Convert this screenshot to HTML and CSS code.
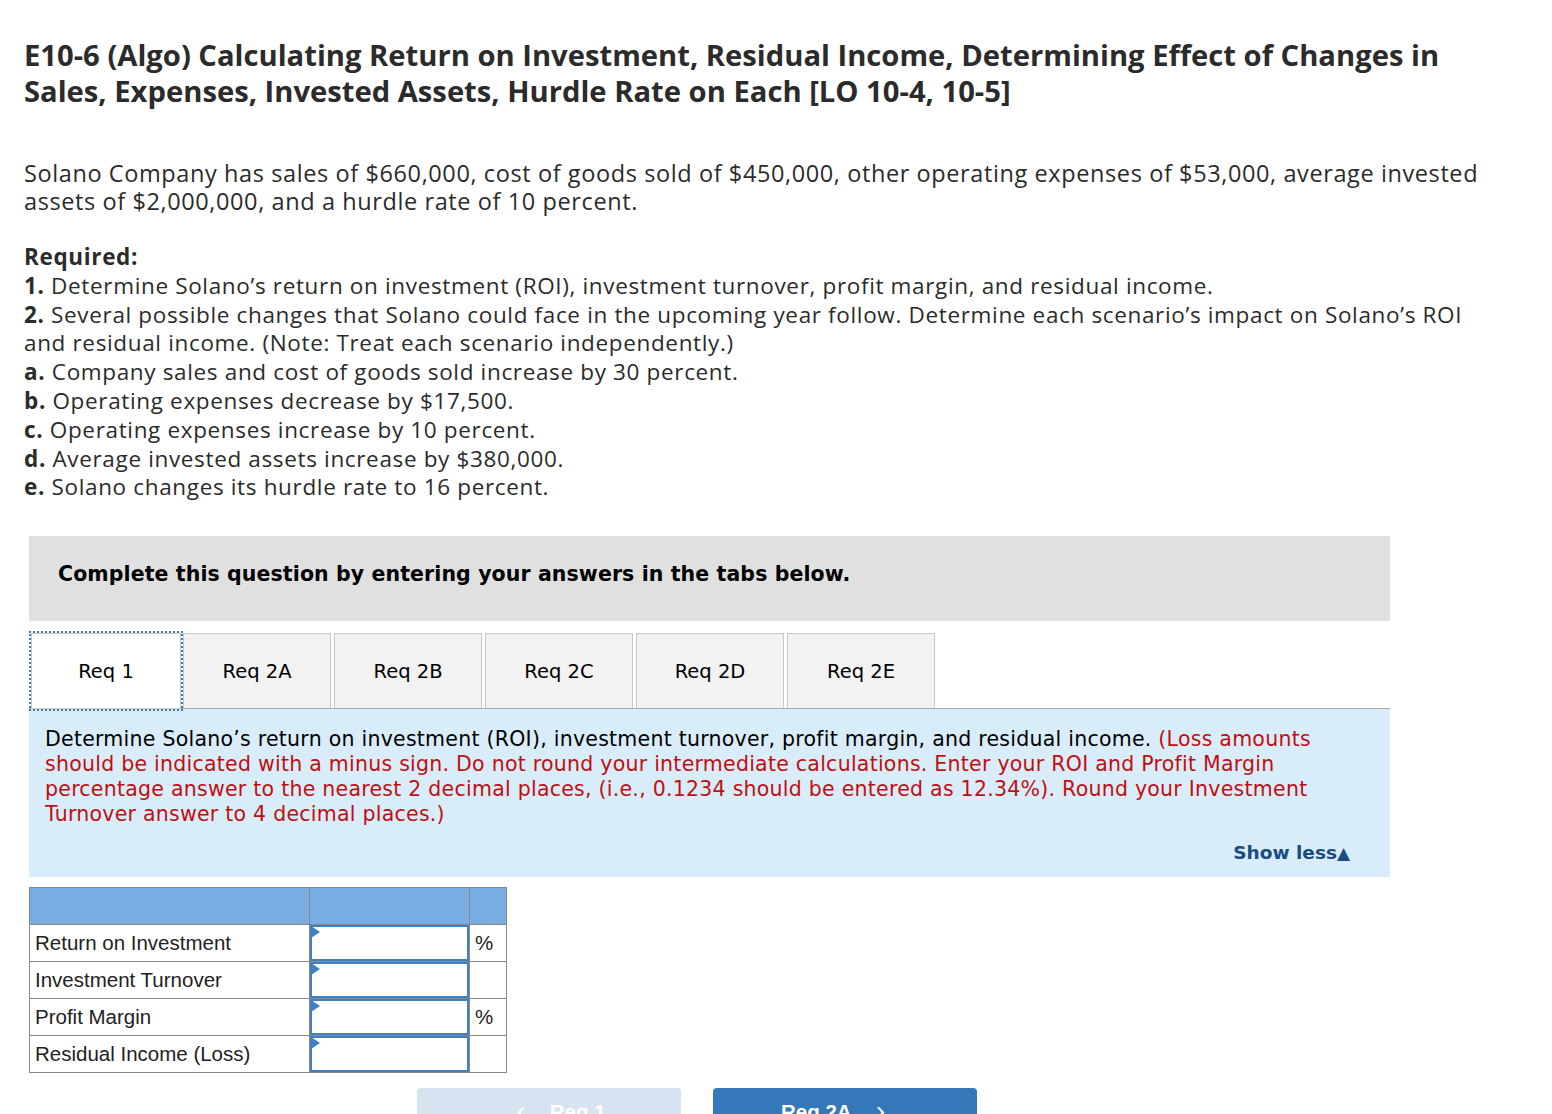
FILE: index.html
```html
<!DOCTYPE html>
<html>
<head>
<meta charset="utf-8">
<link rel="stylesheet" href="styles.css">
</head>
<body>
<div class="page">
  <h1 class="title">E10-6 (Algo) Calculating Return on Investment, Residual Income, Determining Effect of Changes in Sales, Expenses, Invested Assets, Hurdle Rate on Each [LO 10-4, 10-5]</h1>
  <p class="intro">Solano Company has sales of $660,000, cost of goods sold of $450,000, other operating expenses of $53,000, average invested assets of $2,000,000, and a hurdle rate of 10 percent.</p>
  <div class="required">
    <div><b>Required:</b></div>
    <div><b>1.</b> Determine Solano’s return on investment (ROI), investment turnover, profit margin, and residual income.</div>
    <div><b>2.</b> Several possible changes that Solano could face in the upcoming year follow. Determine each scenario’s impact on Solano’s ROI and residual income. (Note: Treat each scenario independently.)</div>
    <div><b>a.</b> Company sales and cost of goods sold increase by 30 percent.</div>
    <div><b>b.</b> Operating expenses decrease by $17,500.</div>
    <div><b>c.</b> Operating expenses increase by 10 percent.</div>
    <div><b>d.</b> Average invested assets increase by $380,000.</div>
    <div><b>e.</b> Solano changes its hurdle rate to 16 percent.</div>
  </div>

  <div class="work">
    <div class="banner">Complete this question by entering your answers in the tabs below.</div>
    <div class="tabs">
      <div class="tab active">Req 1</div>
      <div class="tab">Req 2A</div>
      <div class="tab">Req 2B</div>
      <div class="tab">Req 2C</div>
      <div class="tab">Req 2D</div>
      <div class="tab">Req 2E</div>
    </div>
    <div class="panel">
      <p class="instr">Determine Solano’s return on investment (ROI), investment turnover, profit margin, and residual income. <span class="red">(Loss amounts should be indicated with a minus sign. Do not round your intermediate calculations. Enter your ROI and Profit Margin percentage answer to the nearest 2 decimal places, (i.e., 0.1234 should be entered as 12.34%). Round your Investment Turnover answer to 4 decimal places.)</span></p>
      <div class="showless">Show less<span class="tri">▲</span></div>
    </div>

    <table class="grid">
      <tr class="head"><td class="c1"></td><td class="c2"></td><td class="c3"></td></tr>
      <tr><td class="c1">Return on Investment</td><td class="c2"><div class="inp"></div></td><td class="c3">%</td></tr>
      <tr><td class="c1">Investment Turnover</td><td class="c2"><div class="inp"></div></td><td class="c3"></td></tr>
      <tr><td class="c1">Profit Margin</td><td class="c2"><div class="inp"></div></td><td class="c3">%</td></tr>
      <tr><td class="c1">Residual Income (Loss)</td><td class="c2"><div class="inp"></div></td><td class="c3"></td></tr>
    </table>

    <div class="nav">
      <div class="btn prev"><span class="chev">‹</span>Req 1</div>
      <div class="btn next">Req 2A<span class="chev">›</span></div>
    </div>
  </div>
</div>
</body>
</html>
```

FILE: styles.css
```css
html, body {
  margin: 0;
  padding: 0;
  background: #fff;
}
body {
  overflow: hidden;
}
.page {
  padding: 37px 24px 0 24px;
  color: #2b2b2b;
  font-family: "Open Sans", "Noto Sans", sans-serif;
}
.title {
  margin: 0;
  font-size: 29.2px;
  line-height: 36px;
  font-weight: 700;
  color: #2b2b2b;
  width: 1460px;
}
.intro {
  margin: 50px 0 0 0;
  font-size: 23.5px;
  letter-spacing: 0.6px;
  line-height: 28px;
  width: 1495px;
}
.required {
  margin-top: 28px;
  font-size: 22.5px;
  letter-spacing: 0.65px;
  line-height: 28.8px;
  width: 1475px;
}
.required b {
  font-weight: 700;
}
.work {
  margin-top: 34px;
  margin-left: 5px;
  width: 1361px;
  font-family: "DejaVu Sans", Verdana, sans-serif;
  color: #000;
}
.banner {
  background: #e0e0e0;
  height: 85px;
  box-sizing: border-box;
  padding: 0 29px 10px 29px;
  display: flex;
  align-items: center;
  font-weight: 700;
  font-size: 20.5px;
  letter-spacing: 0.1px;
}
.tabs {
  display: flex;
  margin-top: 12px;
  border-bottom: 1px solid #a8a8a8;
  height: 76px;
  box-sizing: border-box;
  padding-left: 2px;
  gap: 3px;
}
.tab {
  width: 148px;
  height: 75px;
  box-sizing: border-box;
  background: #f2f2f2;
  border: 1px solid #c8c8c8;
  border-bottom: none;
  display: flex;
  align-items: center;
  justify-content: center;
  font-size: 19.5px;
  color: #000;
}
.tab.active {
  background: #fff;
  outline: 2px dotted #3a7ac4;
  outline-offset: 0;
  width: 150px;
  margin-right: -1px;
  height: 76px;
  position: relative;
  z-index: 1;
  border: 1px solid #c8c8c8;
}
.panel {
  background: #d9ecfa;
  padding: 18px 16px 14px 16px;
}
.instr {
  margin: 0;
  font-size: 20.5px;
  letter-spacing: 0.25px;
  line-height: 25px;
  width: 1280px;
}
.red {
  color: #c00f0f;
}
.showless {
  text-align: right;
  margin-top: 15px;
  margin-right: 24px;
  font-weight: 700;
  font-size: 18.5px;
  color: #1a4b82;
}
.tri {
  font-size: 17px;
}
.grid {
  margin-top: 10px;
  border-collapse: collapse;
  font-family: "Liberation Sans", Arial, sans-serif;
  font-size: 20.5px;
  color: #222;
}
.grid td {
  border: 1px solid #888;
  height: 37px;
  padding: 0;
  box-sizing: border-box;
}
.grid .head td {
  background: #79ade2;
  height: 37px;
}
.grid .c1 {
  width: 280px;
  padding-left: 5px;
}
.grid .c2 {
  width: 160px;
}
.grid .c3 {
  width: 37px;
  padding-left: 5px;
}
.inp {
  height: 36px;
  box-sizing: border-box;
  border: 2px solid #3f7fc4;
  background: #fff;
  position: relative;
}
.inp::before {
  content: "";
  position: absolute;
  left: -1px;
  top: -1px;
  border-top: 6px solid transparent;
  border-bottom: 6px solid transparent;
  border-left: 9px solid #3f7fc4;
}
.nav {
  display: flex;
  gap: 32px;
  margin-top: 15px;
  margin-left: 388px;
}
.btn {
  width: 264px;
  height: 50px;
  border-radius: 4px;
  color: #fff;
  font-family: "Liberation Sans", Arial, sans-serif;
  font-weight: 700;
  font-size: 20.5px;
  display: flex;
  align-items: flex-start;
  justify-content: center;
  padding-top: 12px;
  box-sizing: border-box;
}
.btn.prev {
  background: #d6e4f1;
}
.btn.next {
  background: #3578b9;
}
.chev {
  font-weight: 400;
  font-size: 28px;
  line-height: 22px;
  margin: 0 24px;
}
```
